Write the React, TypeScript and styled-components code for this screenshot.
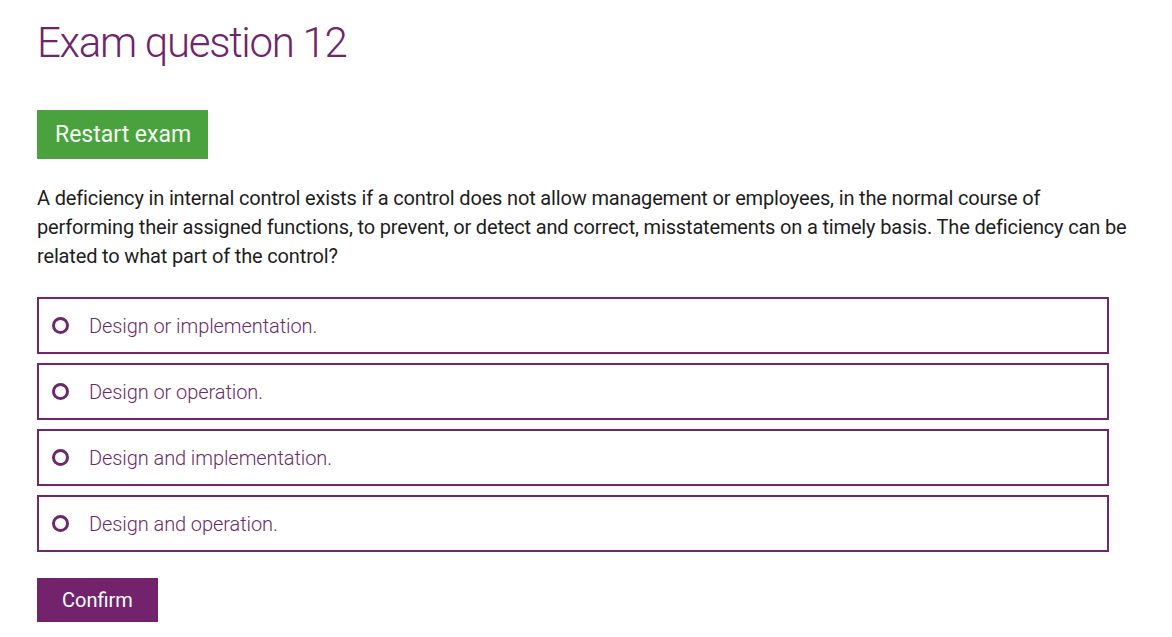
import { useState } from "react";
import styled, { createGlobalStyle } from "styled-components";

const GlobalStyle = createGlobalStyle`
    html, body {
        margin: 0;
        padding: 0;
        background: #ffffff;
        font-family: Roboto, "Liberation Sans", Arial, sans-serif;
    }
`;

const Page = styled.div`
    padding: 15px 37px 20px 37px;
    max-width: 1098px;
`;

const Title = styled.h1`
    margin: 0;
    font-size: 42px;
    line-height: 56px;
    font-weight: 300;
    letter-spacing: -1.3px;
    color: #70246b;
`;

const RestartButton = styled.button`
    display: block;
    margin-top: 39px;
    height: 49px;
    padding: 0 17px 0 18px;
    border: none;
    background: #4aa23f;
    color: #f4fbf2;
    font-family: inherit;
    font-size: 23px;
    font-weight: 400;
    cursor: pointer;
`;

const Question = styled.p`
    margin: 25px 0 0 0;
    font-size: 20px;
    line-height: 29px;
    letter-spacing: -0.16px;
    color: #1d1d1d;
`;

const OptionsList = styled.ul`
    list-style: none;
    margin: 26px 0 0 0;
    padding: 0;
    width: 1072px;
    display: flex;
    flex-direction: column;
    gap: 9px;
`;

const Option = styled.li<{ $selected: boolean }>`
    box-sizing: border-box;
    height: 57px;
    border: 2px solid #72276c;
    display: flex;
    align-items: center;
    padding-left: 13px;
    cursor: pointer;
    background: ${props => (props.$selected ? "#f7eef6" : "#ffffff")};
`;

const Radio = styled.span<{ $selected: boolean }>`
    box-sizing: border-box;
    width: 17px;
    height: 17px;
    border-radius: 50%;
    border: 3.5px solid #6e2868;
    background: ${props => (props.$selected ? "#6e2868" : "transparent")};
    flex-shrink: 0;
`;

const OptionText = styled.span`
    margin-left: 20px;
    font-size: 20px;
    font-weight: 300;
    letter-spacing: -0.08px;
    color: #6c2b66;
`;

const ConfirmButton = styled.button`
    display: block;
    margin-top: 26px;
    height: 44px;
    padding: 0 25px;
    border: none;
    background: #72236b;
    color: #ffffff;
    font-family: inherit;
    font-size: 20px;
    cursor: pointer;
`;

const options = [
    "Design or implementation.",
    "Design or operation.",
    "Design and implementation.",
    "Design and operation.",
];

function App() {
    const [selected, setSelected] = useState<number | null>(null);

    return <Page>
        <GlobalStyle />
        <Title>Exam question 12</Title>
        <RestartButton>Restart exam</RestartButton>
        <Question>
            A deficiency in internal control exists if a control does not allow management or employees, in the normal course of
            performing their assigned functions, to prevent, or detect and correct, misstatements on a timely basis. The deficiency can be
            related to what part of the control?
        </Question>
        <OptionsList>
            {options.map((text, i) => (
                <Option key={text} $selected={selected === i} onClick={() => setSelected(i)}>
                    <Radio $selected={selected === i} />
                    <OptionText>{text}</OptionText>
                </Option>
            ))}
        </OptionsList>
        <ConfirmButton>Confirm</ConfirmButton>
    </Page>;
}

export default App;
